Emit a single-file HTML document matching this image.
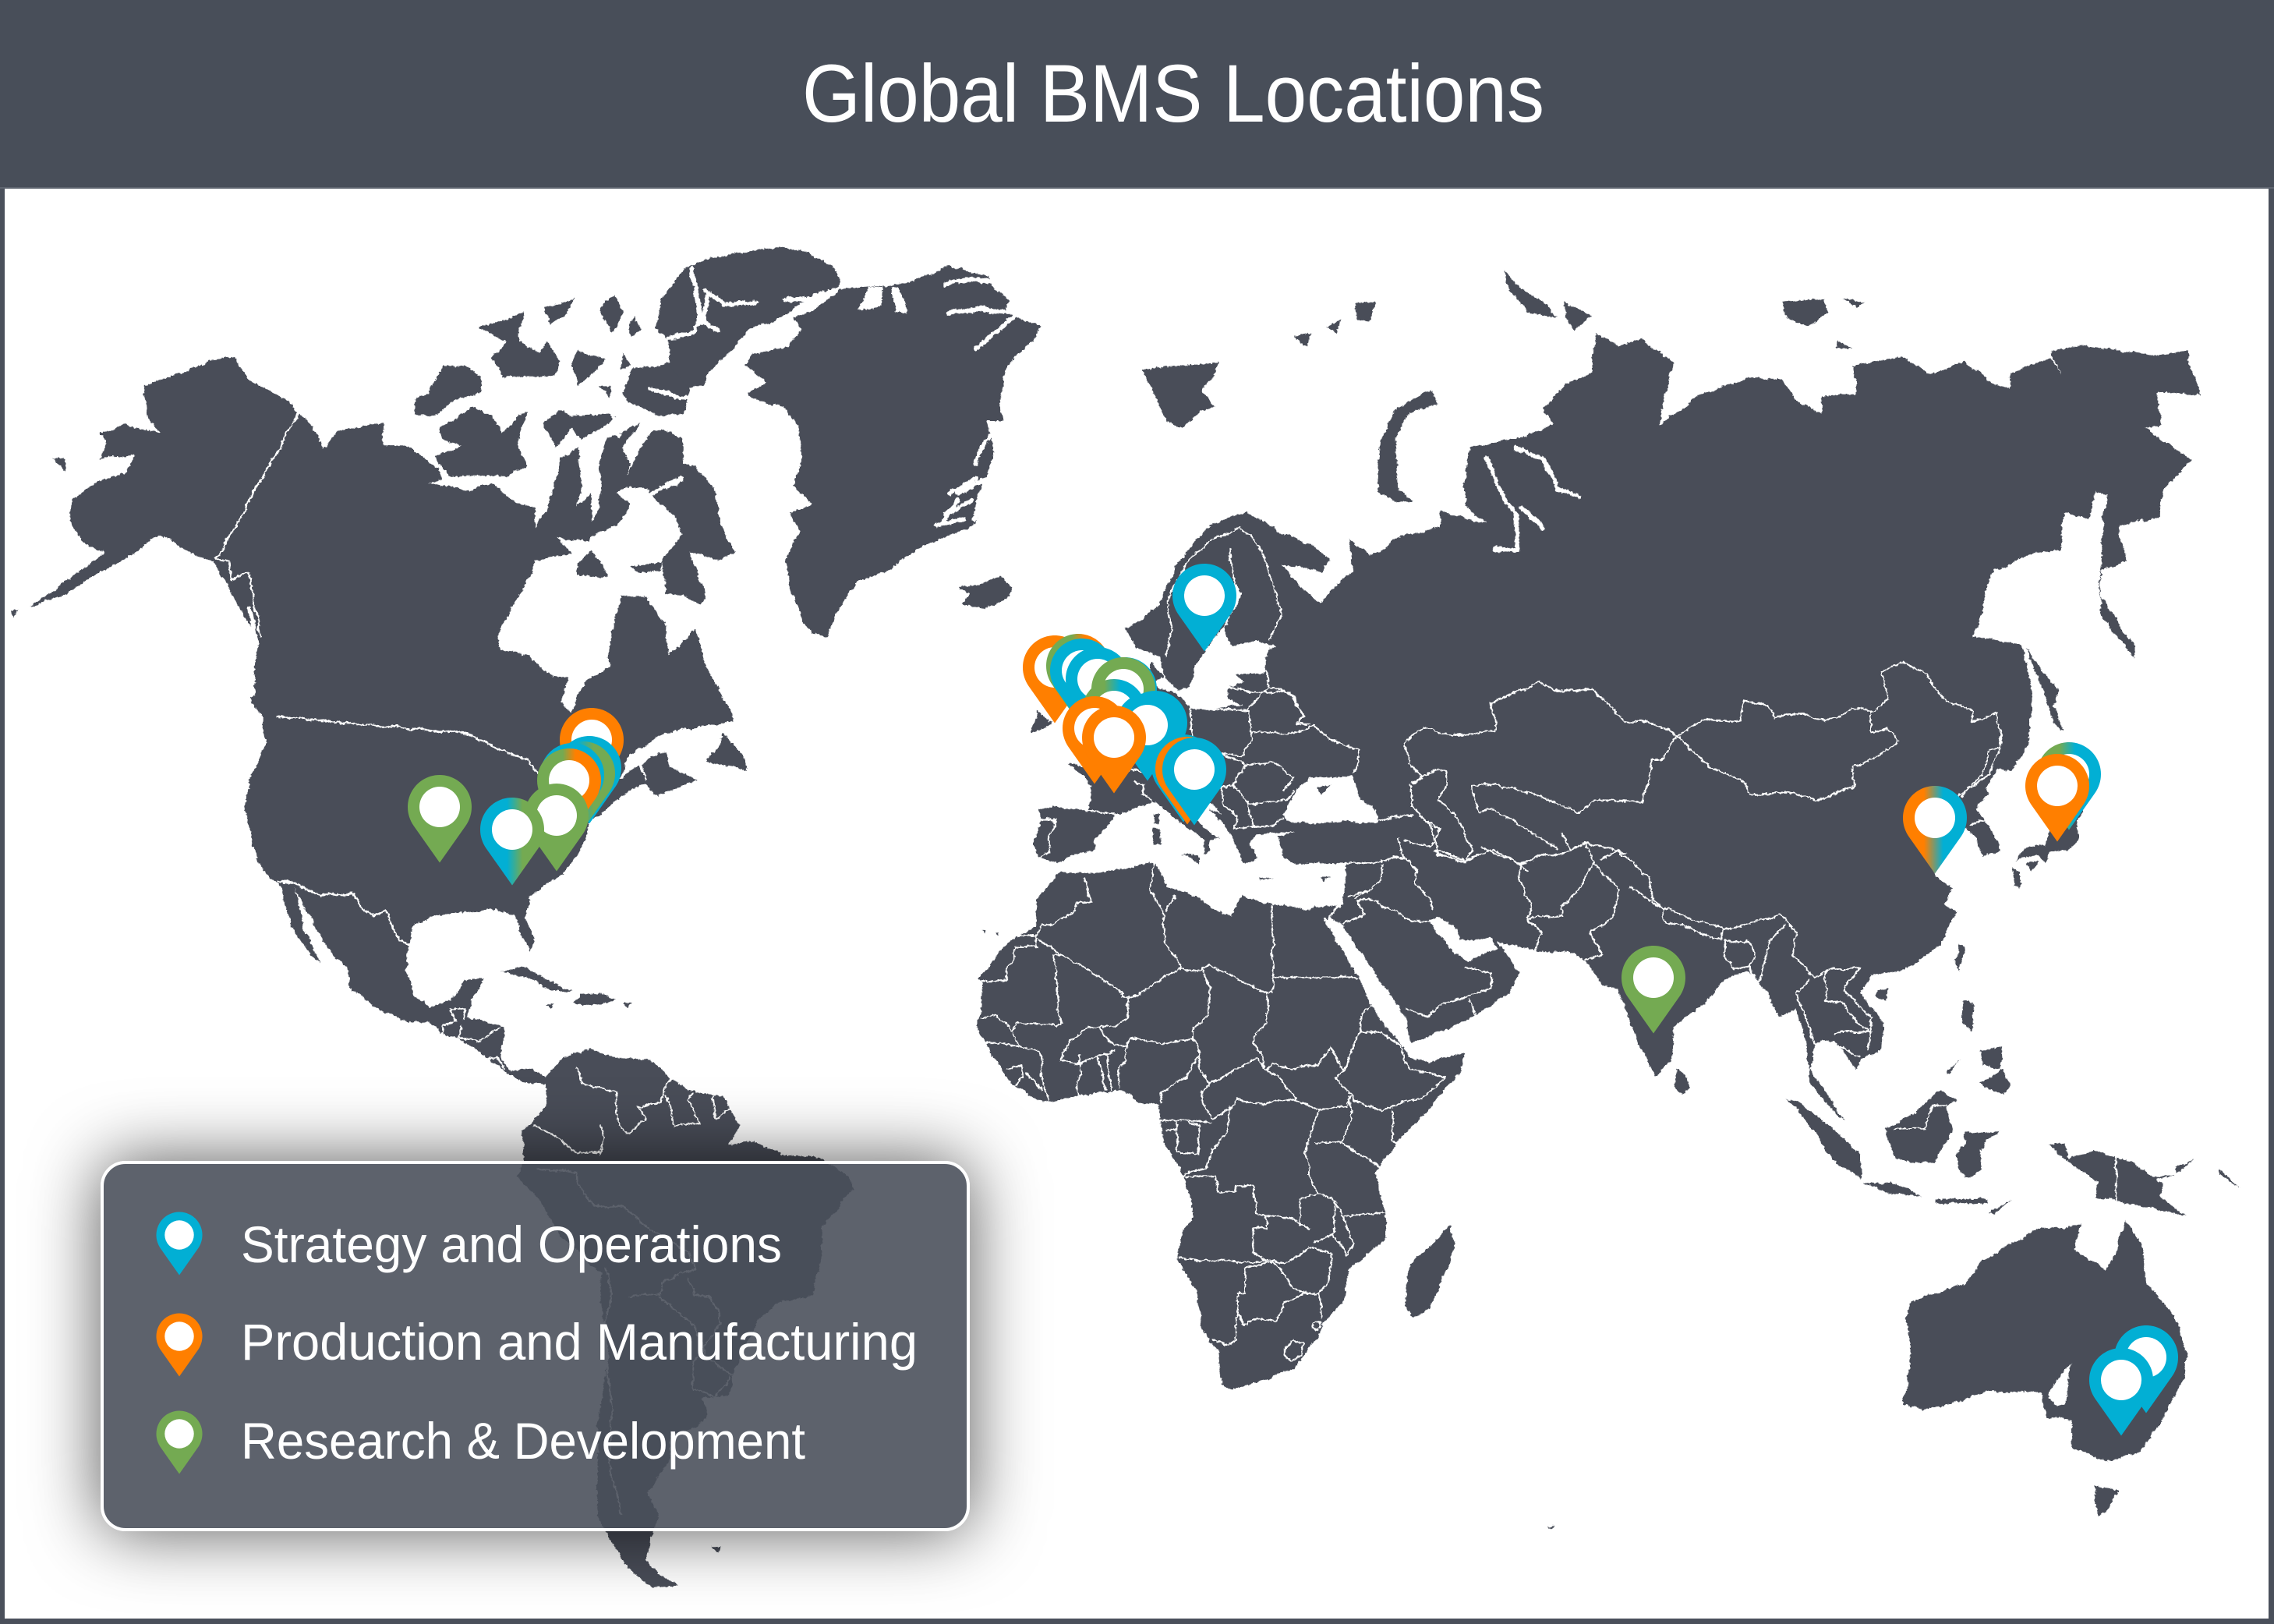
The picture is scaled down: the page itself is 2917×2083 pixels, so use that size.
<!DOCTYPE html>
<html><head><meta charset="utf-8"><title>Global BMS Locations</title>
<style>
html,body{margin:0;padding:0;background:#fff}
#w{position:relative;width:2917px;height:2083px;overflow:hidden;background:#fff;font-family:"Liberation Sans",sans-serif}
svg{position:absolute;left:0;top:0}
#panel{position:absolute;left:129px;top:1489px;width:1115px;height:475px;box-sizing:border-box;border:4px solid #fff;border-radius:32px;background:rgba(72,78,89,.885);box-shadow:0 0 90px rgba(0,0,0,.66)}
</style></head><body><div id="w">
<svg width="2917" height="2083" viewBox="0 0 2917 2083">
<defs>
<filter id="rough" filterUnits="userSpaceOnUse" x="0" y="0" width="2917" height="2083"><feTurbulence type="fractalNoise" baseFrequency=".06" numOctaves="3" seed="4" result="a"/><feDisplacementMap in="SourceGraphic" in2="a" scale="7" xChannelSelector="R" yChannelSelector="G" result="b"/><feTurbulence type="fractalNoise" baseFrequency=".28" numOctaves="2" seed="9" result="c"/><feDisplacementMap in="b" in2="c" scale="4" xChannelSelector="R" yChannelSelector="G"/></filter>
<linearGradient id="go" x1="0" x2="1" y1="0" y2="0"><stop offset=".4" stop-color="#74aa52"/><stop offset=".6" stop-color="#ff7f00"/></linearGradient>
<linearGradient id="gb" x1="0" x2="1" y1="0" y2="0"><stop offset=".35" stop-color="#74aa52"/><stop offset=".6" stop-color="#02afd4"/></linearGradient>
<linearGradient id="bg" x1="0" x2="1" y1="0" y2="0"><stop offset=".42" stop-color="#02afd4"/><stop offset=".66" stop-color="#74aa52"/></linearGradient>
<linearGradient id="ob" x1="0" x2="1" y1="0" y2="0"><stop offset=".33" stop-color="#ff7f00"/><stop offset=".63" stop-color="#02afd4"/></linearGradient>
<g id="pin"><path d="M0-41C22.6-41 41-22.6 41 0 41 9 38.2 17 33.5 24L0 71.5-33.5 24C-38.2 17-41 9-41 0-41-22.6-22.6-41 0-41Z"/><circle r="26" fill="#fff"/></g>
</defs>
<rect width="2917" height="2083" fill="#4a505b"/>
<rect x="6" y="242" width="2904" height="1834" fill="#fff"/>
<rect width="2917" height="240" fill="#484e59"/>
<rect y="240" width="2917" height="2" fill="#5f6570"/>
<text x="1029" y="156" font-size="105" fill="#fff" font-family="'Liberation Sans',sans-serif" textLength="952" lengthAdjust="spacingAndGlyphs">Global BMS Locations</text>

<g filter="url(#rough)"><g transform="scale(1.8604)">
<g fill="#484e59">
<!-- North + Central America -->
<path d="M69 299L85 293 98 296 110 298 102 288 99 266 120 259 144 249 161 247 171 261 202 278 206 285 219 299 223 309 233 297 264 292 264 307 281 307 302 323 305 331 295 333 322 338 339 333 356 347 369 350 369 364 377 352 382 335 387 316 399 309 401 335 398 350 408 340 408 359 422 340 435 350 425 362 408 369 405 374 384 371 394 381 369 387 367 395 360 407 346 431 343 441 346 448 363 451 381 466 392 468 387 484 394 491 403 470 420 460 420 443 428 417 428 410 446 412 459 431 461 452 480 434 487 460 506 494 505 497 459 505 434 520 428 537 444 525 459 518 462 529 481 538 453 549 444 540 428 549 407 567 404 578 394 596 380 607 365 618 363 633 369 649 365 655 359 645 356 631 342 627 323 629 299 631 286 637 282 651 280 669 286 687 296 694 311 690 320 676 333 675 326 689 322 702 348 708 345 729 351 738 367 737 376 743 379 748 360 746 348 739 336 729 317 716 305 713 296 705 283 705 258 694 240 680 240 669 223 649 212 629 203 611 210 640 221 665 209 652 201 639 194 612 178 596 169 558 172 538 183 513 181 495 172 480 175 479 178 441 161 412 147 387 130 381 118 371 110 369 93 381 72 393 45 410 21 418 40 404 72 381 57 374 48 359 50 345 65 333 86 326 93 314 69 316 74 305Z"/>
<!-- Arctic islands -->
<path d="M305 253L320 252 331 259 332 271 315 275 302 285 295 287 286 286 286 275 295 271Z"/>
<path d="M303 295L326 280 339 287 346 299 357 287 363 283 357 307 363 321 350 328 326 328 309 328 300 314 319 309 305 302Z"/>
<path d="M374 292L387 283 394 287 422 285 425 287 401 304 394 295 384 309 375 295Z"/>
<path d="M398 388L408 379 420 398 408 398 398 395Z"/>
<path d="M413 321L419 302 442 292 429 309 435 319 432 328 449 297 459 297 471 302 471 319 480 323 494 340 497 362 507 381 494 386 476 381 487 412 483 417 470 410 459 410 456 386 470 369 466 357 446 338 435 335 425 340 435 347 425 362 411 359 415 335Z"/>
<path d="M435 391L456 387 456 394 439 394Z"/>
<path d="M330 226L362 215 357 230 358 235 372 244 377 235 386 249 382 259 346 260 339 247 350 235 338 230Z"/>
<path d="M375 213L396 206 389 218 379 224Z"/><path d="M413 213L423 203 430 215 422 230Z"/>
<path d="M434 225L437 218 442 227 435 232Z"/><path d="M398 242L417 247 411 256 399 266 394 251Z"/>
<path d="M429 244L434 251 429 255Z"/><path d="M413 266L422 266 420 275Z"/>
<path d="M435 254L463 251 483 254 487 263 476 268 471 285 456 287 435 278 429 273Z"/>
<path d="M452 225L456 206 473 184 487 179 507 175 535 170 553 173 574 183 579 192 578 199 562 202 543 216 529 223 516 227 502 244 488 258 486 265 475 268 462 252 461 235Z"/>
<!-- Greenland, Iceland, Caribbean -->
<path d="M579 200L595 198 615 197 627 194 644 189 654 183 681 191 685 200 696 207 693 216 718 225 714 233 704 242 695 252 689 275 692 290 680 290 685 310 673 360 669 363 646 373 630 379 615 392 590 402 576 425 570 440 555 432 545 406 541 386 551 367 545 354 560 348 547 335 553 315 551 294 541 281 523 277 515 271 529 264 514 252 518 244 543 239 553 227 547 219 562 213Z"/>
<path d="M660 404L673 404 691 397 698 406 693 413 679 420 663 417 669 409Z"/>
<path d="M346 670L360 667 376 674 394 684 379 684 370 676 348 670Z"/><path d="M400 686L416 685 424 690 407 694 396 691Z"/>
<path d="M376 692L382 692 379 695Z"/><path d="M430 692L436 692 433 695Z"/>
<path d="M499 506L513 522 515 531 487 525 497 513Z"/>
<!-- South America -->
<path d="M376 743L388 729 407 723 422 729 447 731 459 740 474 752 499 756 511 776 502 789 521 787 539 796 564 798 586 812 588 819 568 845 566 868 560 894 539 897 523 910 507 943 503 962 483 964 489 975 479 984 462 990 462 1006 446 1030 454 1044 450 1057 448 1066 445 1075 455 1085 468 1093 450 1095 432 1080 420 1060 412 1044 412 981 420 935 414 899 414 877 386 852 374 830 357 812 361 799 360 781 377 763Z"/>
<!-- Africa -->
<path d="M731 601L755 602 796 595 805 611 826 619 837 627 849 632 856 618 878 623 900 627 922 624 916 634 912 633 930 663 938 675 944 692 967 722 973 729 985 732 1010 726 1007 739 988 761 963 788 949 808 952 826 956 835 955 855 930 875 927 897 912 912 912 917 892 944 864 954 849 958 842 954 840 932 829 917 825 890 812 868 815 850 823 838 818 813 804 791 801 781 799 761 785 761 774 751 744 756 719 760 697 747 674 710 678 677 675 675 694 650 714 638 714 621Z"/>
<path d="M1000 844L1003 860 986 902 974 908 969 900 973 870 988 858Z"/>
<!-- Eurasia -->
<path d="M860 353L872 360 884 368 904 375 918 386 911 394 884 389 899 408 911 415 921 404 933 394 930 372 945 383 967 369 993 364 993 353 1025 361 1010 348 1010 334 1013 309 1049 301 1071 293 1064 282 1079 265 1098 257 1100 230 1117 238 1132 234 1154 250 1147 276 1144 293 1171 273 1188 267 1210 260 1229 262 1239 276 1256 286 1256 273 1280 272 1278 252 1312 246 1331 258 1355 249 1372 264 1385 267 1387 257 1414 246 1421 258 1414 242 1433 238 1487 245 1508 242 1511 254 1518 272 1487 271 1491 293 1479 295 1511 317 1491 339 1489 357 1462 361 1460 369 1467 386 1448 394 1448 411 1472 446 1472 454 1448 424 1450 358 1453 342 1445 338 1440 358 1423 353 1421 380 1399 382 1372 396 1365 427 1360 439 1394 444 1402 479 1399 512 1387 532 1378 530 1369 543 1371 548 1362 557 1369 566 1378 580 1378 586 1367 591 1362 577 1356 571 1350 566 1340 572 1334 602 1346 613 1341 623 1349 630 1337 652 1314 669 1290 672 1283 685 1299 705 1297 724 1283 731 1280 737 1266 718 1253 718 1248 737 1272 773 1262 763 1248 747 1245 718 1239 695 1227 701 1217 682 1206 669 1189 675 1175 692 1154 708 1152 731 1142 742 1130 721 1116 682 1105 679 1095 665 1086 657 1060 656 1032 649 1046 669 1048 670 1040 685 1015 702 974 719 969 702 947 670 927 640 918 632 926 622 927 606 928 595 894 596 885 591 882 582 880 577 894 573 866 575 861 582 867 591 858 595 851 580 844 568 834 559 842 561 825 545 820 552 825 565 834 574 840 577 834 579 834 586 830 588 830 580 822 572 810 564 796 552 784 557 770 561 767 564 755 579 755 586 740 590 729 595 716 591 713 582 718 564 716 559 720 556 750 559 752 548 753 541 737 527 747 528 760 512 775 497 790 478 794 456 803 466 795 472 815 481 821 489 840 488 858 487 847 482 847 474 858 471 853 465 872 464 874 448 881 446 867 442 849 446 844 433 857 409 851 401 849 407 844 431 831 449 824 460 821 473 811 476 804 467 799 453 783 446 776 433 786 428 799 417 810 392 820 378 836 361Z"/>
<!-- Islands Europe / Asia -->
<path d="M714 489L726 498 722 501 711 505 715 494Z"/><path d="M727 455L742 445 752 480 765 495 735 510 745 495 735 480Z"/>
<path d="M788 255L840 250 835 262 828 270 838 280 826 285 815 295 805 290 795 270Z"/>
<path d="M892 232L905 230 900 238Z"/><path d="M915 225L925 220 922 230Z"/><path d="M935 210L948 208 944 222 936 220Z"/>
<path d="M986 269L991 278 972 284 962 301 962 315 964 337 974 345 962 346 950 339 950 326 952 304 962 282Z"/>
<path d="M1037 186L1049 199 1064 208 1074 219 1054 216 1040 199Z"/><path d="M1079 208L1096 217 1086 228 1079 219Z"/>
<path d="M1229 208L1258 206 1261 216 1246 225 1232 219Z"/><path d="M1270 206L1285 208 1280 212Z"/><path d="M1266 235L1277 239 1266 241Z"/>
<path d="M1397 446L1406 460 1419 476 1416 487 1423 504 1416 498 1409 476 1402 460Z"/>
<path d="M1412 574L1425 530 1445 538 1432 567 1433 580 1424 587 1414 587 1410 596 1405 589 1397 591 1390 594 1397 585 1410 582Z"/>
<path d="M1387 598L1393 600 1393 612 1389 611Z"/><path d="M1397 596L1406 593 1405 597 1399 601Z"/>
<path d="M815 589L827 589 827 596Z"/><path d="M796 562L799 562 799 568 796 568Z"/><path d="M795 571L800 571 800 583 795 582Z"/>
<path d="M911 605L918 605 912 608Z"/><path d="M868 604L879 605 870 606Z"/>
<path d="M1156 737L1162 742 1165 750 1160 755 1155 750Z"/><path d="M1351 651L1355 652 1351 669 1348 662Z"/><path d="M1295 683L1302 682 1300 690 1294 688Z"/>
<path d="M1232 757L1245 763 1266 780 1283 796 1283 812 1266 802 1248 776Z"/>
<path d="M1285 815L1311 817 1325 825 1300 822Z"/><path d="M1335 827L1370 827 1370 830 1335 830Z"/><path d="M1372 835L1388 828 1375 836Z"/>
<path d="M1300 778L1321 767 1337 752 1349 758 1342 763 1346 780 1334 802 1307 799 1302 786Z"/>
<path d="M1355 781L1379 780 1370 786 1365 793 1367 806 1356 812 1351 806 1349 796 1355 789Z"/>
<path d="M1353 690L1361 692 1360 711 1353 705Z"/><path d="M1365 724L1381 721 1379 737 1367 734Z"/><path d="M1365 747L1381 737 1387 747 1381 755Z"/><path d="M1342 739L1351 731 1344 740Z"/>
<path d="M1412 789L1424 789 1426 799 1443 793 1471 802 1492 817 1489 825 1506 838 1492 835 1471 830 1445 825 1447 815 1429 804 1421 796Z"/>
<path d="M1500 805L1512 800 1502 808Z"/><path d="M1530 806L1545 820 1530 810Z"/><path d="M1475 812L1500 810 1480 815Z"/>
<!-- Australia -->
<path d="M1318 897L1356 885 1365 871 1388 856 1405 848 1435 845 1430 861 1452 876 1459 864 1465 841 1477 858 1480 884 1499 907 1508 933 1506 949 1489 982 1475 1001 1454 1008 1429 998 1428 978 1412 977 1407 960 1370 959 1349 967 1325 972 1313 968 1318 933 1314 910Z"/>
<path d="M1444 1024L1461 1027 1454 1040 1446 1045Z"/>
<path d="M37 317L44 316 46 325 40 321Z"/>
<path d="M8 421L12 420 9 426Z"/><path d="M677 642L680 642 679 644Z"/><path d="M686 643L689 643 688 645Z"/><path d="M490 1067L497 1066 494 1070Z"/><path d="M1067 1053L1072 1052 1070 1055Z"/>
</g>
<!-- White seas / fjords -->
<g fill="#fff">
<path d="M885 561L894 545 902 536 918 536 933 534 938 552 950 559 950 568 928 566 904 568 887 566Z"/>
<path d="M991 632L1002 638 1007 648 1029 647 1032 654 1012 663 1004 658 985 635Z"/>
<path d="M1412 960L1428 940 1424 968 1418 970Z"/>
<path d="M599 198L592 214 607 211 609 198Z"/><path d="M615 198L617 215 626 216 620 198Z"/>
</g>
<path d="M909 543L918 541 911 548Z" fill="#484e59"/>
<g fill="none" stroke="#fff" stroke-linejoin="round" stroke-linecap="round">
<g stroke-width="3">
<path d="M1025 315L1035 340 1046 356 1046 380 1030 378"/><path d="M1045 309L1064 317 1074 337 1088 342"/><path d="M1049 350L1064 364"/>
<path d="M476 185L481 206 483 219 479 229 461 233M486 200L500 210 520 208M488 205L484 222 495 228M542 207L560 206 574 200"/>
<path d="M651 196L668 192 685 195M654 216L676 213 699 216M699 219L673 240M673 330L655 340M670 345L652 355M665 358L646 362M682 300L672 320"/>
<path d="M448 268L470 275 480 272"/><path d="M440 345L470 330M422 285L426 300"/>
<path d="M660 340L680 330 672 358M660 345L650 360"/>
<path d="M172 420L177 445M168 440L172 470"/>
</g>
<g stroke-width="1.3">
<path d="M206 285L149 386 158 387 159 400 171 395 175 415 180 439"/>
<path d="M192 494L323 506 336 513 363 524 371 533"/><path d="M428 536L441 525 445 538"/>
<path d="M192 608L204 609 220 617 235 617 243 616 251 628 258 632 266 628 275 648 283 651"/>
</g>
<g stroke-width="1.05">
<path d="M311 696L320 695 320 703M311 696L314 704 305 707 306 713M319 707L316 715 330 718 345 709M336 729L342 729 348 738"/>
<path d="M397 736L402 747 425 753 424 767 428 778 434 781 445 772 439 763 456 760 459 747 464 742M459 756L465 776 482 774 475 758 478 754M492 755L493 772 504 763"/>
<path d="M414 775L417 785 413 796M368 776L385 784 397 794 413 795M370 806L398 808 398 817 410 832 430 832 442 843 475 863 479 875 458 883 454 892 434 894"/>
<path d="M418 875L422 892 416 914 422 972 420 1008 428 1044M475 881L479 894 489 894 495 903 497 912 478 939 478 957 493 963 505 948 487 935 479 914 454 894"/>
<!-- Africa -->
<path d="M748 606L752 621 742 622 741 628 727 637 718 638 715 643 715 647M696 645L715 645 715 653 700 653 698 665 694 668 694 676 675 677"/>
<path d="M715 647L766 679 774 684 774 688 785 686 793 680 814 667M727 658L731 706 701 706 698 710M727 658L733 658"/>
<path d="M796 595L793 613 803 631 803 650 814 666M811 617L804 627M814 667L825 670 834 666 874 685 878 684 877 624M878 674L936 674"/>
<path d="M874 685L874 705 867 712 864 719 870 727 871 737M829 668L834 681 833 700 823 709 823 716"/>
<path d="M823 716L804 719 793 718 779 716 777 719 775 732 772 737 771 750M778 688L778 702 771 707 757 708 749 709 738 717 733 726 731 732"/>
<path d="M757 708L760 713 768 721 776 721M731 732L744 734 757 728 768 724M744 728L745 739 742 751 745 758M757 728L762 751M763 727L766 751"/>
<path d="M677 702L686 700 694 705 698 712 703 721 716 724 719 732 718 744 722 759M675 719L690 719 703 721M694 737L704 734 705 742 701 748M707 740L713 745 718 752"/>
<path d="M827 727L818 742 807 749 801 754 800 760M823 716L827 726 826 737 834 747"/>
<path d="M834 747L829 753 829 761 836 771 848 765 853 758 867 761 889 758 900 761 910 765 928 763M834 747L851 739 866 729 873 738 881 742 893 758"/>
<path d="M873 738L878 733 892 737 908 734 918 722 921 728 926 739 921 743 932 755 928 763M926 739L937 712 952 711 966 722 971 737 996 743 981 758 969 759 954 765 934 760 932 755M937 712L940 697 947 693"/>
<path d="M960 766L960 787 963 788M925 787L951 805M930 756L932 772 925 787 907 788"/>
<path d="M849 764L845 781 836 793 832 806 818 808 816 811M818 811L838 811 841 822 852 822 852 817 864 818 866 837 889 840 903 848 896 843 897 826 908 823 919 826 926 838M910 765L904 781 900 796 903 811 908 823"/>
<path d="M800 772L812 772 836 774M812 772L812 795 826 795 827 776 820 774M812 779L803 779"/>
<path d="M874 838L874 847 864 847 864 863 873 870M813 867L826 869 848 869 856 871 878 869 888 871 903 860 918 864 917 882 910 892M906 856L919 851 921 828M926 838L930 850 933 858 929 866 925 860 919 851M926 839L955 835"/>
<path d="M859 874L878 870 892 887 899 892 910 893M859 874L858 891 853 891 852 923 847 927 837 923M853 907L858 914 867 908 880 911 886 898 899 892M910 893L911 909"/>
<circle cx="908" cy="914" r="3"/><path d="M886 930L892 924 899 926 898 934 890 938 886 934Z"/>
<!-- Middle East / Central Asia -->
<path d="M928 595L945 595 962 591 968 592M951 566L959 564 974 562M968 592L977 600 975 609 986 620 988 627M964 579L968 592M953 596L952 607 934 620"/>
<path d="M944 619L973 635 985 635M926 637L941 631 936 622 944 619M930 618L944 613M970 696L985 700 995 692 1028 682 1028 670 1010 668M1013 689L1018 700"/>
<path d="M972 542L974 556 986 570 991 583 991 589 1010 594 1015 586 1003 561 991 551 998 542 998 531 989 531 974 540"/>
<path d="M969 512L981 501 1001 507 1032 504 1028 485 1062 470 1071 476 1098 475 1120 498 1137 497 1156 507 1147 523 1139 523 1137 537 1132 553 1100 552 1088 561 1064 549 1030 541 1015 542 1019 561M969 512L972 526 981 537 974 541"/>
<path d="M1156 507L1176 496 1200 498 1202 483 1219 486 1224 494 1244 492 1258 498 1278 489 1292 490 1302 482M1156 507L1178 529 1200 537 1207 548 1234 546 1251 552 1278 542 1278 529 1292 523 1309 511 1302 502 1290 505 1290 490"/>
<path d="M1302 482L1297 463 1312 457 1326 463 1341 483 1360 490 1360 498 1377 492 1380 512 1372 534 1355 545 1344 556M1353 550L1356 543 1367 535 1371 518 1379 514 1379 505M1359 569L1369 566"/>
<path d="M989 586L1010 593 1030 585 1054 600M1019 561L1030 558 1049 570 1074 585M1076 575L1083 586 1093 581 1113 586 1122 589"/>
<path d="M1048 595L1048 607 1056 626 1053 633 1063 643 1058 656M1021 584L1048 595 1067 589 1077 589 1093 581 1098 594 1091 610 1077 626 1077 631 1053 633M1098 594L1116 613 1112 633 1097 643 1105 659 1093 662"/>
<path d="M1103 592L1116 587 1137 605 1140 621 1147 626 1189 641 1227 631 1239 643 1236 659 1252 675M1124 612L1140 623 1147 626 1147 634 1187 649 1189 641M1189 649L1189 659 1196 669 1206 665 1210 675M1189 649L1206 649 1211 659 1206 665M1231 638L1220 649 1215 672 1212 677"/>
<path d="M1248 675L1239 685 1245 701 1252 721 1248 737M1252 675L1259 669 1259 690 1271 692 1280 705 1290 711 1288 724M1266 712L1280 711 1290 711M1266 720L1283 729M1259 669L1283 667 1271 682 1290 701 1290 711"/>
<path d="M1306 778L1327 778 1332 762 1342 762M1459 797L1459 828"/>
<!-- Europe -->
<path d="M804 416L808 433 804 453M804 416L820 385 836 372 855 364 867 375M848 378L850 397 851 401M867 375L877 400 884 424 875 441"/>
<path d="M847 474L871 478 876 474M873 462L876 474 890 478 899 494 895 499 903 499M820 487L861 491 863 511 856 521 843 520 822 508 820 487"/>
<path d="M862 505L892 506 905 500 914 507 926 514 936 516 936 528 933 532M860 490L870 478 890 477 899 493 894 500"/>
<path d="M858 528L878 525 892 536 885 545M850 541L858 528M850 541L861 554 887 552 892 545M842 520L858 527M842 520L842 543 850 541"/>
<path d="M861 554L863 570 878 570 885 564M851 571L878 570M842 543L844 555 854 564 851 571"/>
<path d="M750 558L770 562M717 565L728 565 723 579 724 588 716 592M782 539L788 541 788 548 795 552M778 530L800 535 815 530"/>
<path d="M982 566L993 571 986 584 969 580"/>
</g></g>
</g></g>

<!-- Map pins -->
<g fill="#74aa52">
<use href="#pin" x="564" y="1035"/>
<use href="#pin" x="759" y="949" fill="#ff7f00"/>
<use href="#pin" x="756" y="985" fill="#02afd4"/>
<use href="#pin" x="748" y="992" fill="url(#bg)"/>
<use href="#pin" x="734" y="994" fill="#02afd4"/>
<use href="#pin" x="730" y="1001" fill="url(#go)"/>
<use href="#pin" x="714" y="1046"/>
<use href="#pin" x="657" y="1064" fill="url(#bg)"/>
<use href="#pin" x="1545" y="764" fill="#02afd4"/>
<use href="#pin" x="1353" y="856" fill="#ff7f00"/>
<use href="#pin" x="1383" y="854" fill="url(#go)"/>
<use href="#pin" x="1388" y="860" fill="#02afd4"/>
<use href="#pin" x="1408" y="871" fill="#02afd4"/>
<use href="#pin" x="1443" y="884" fill="#02afd4"/>
<use href="#pin" x="1441" y="884"/>
<use href="#pin" x="1429" y="912" fill="url(#gb)"/>
<use href="#pin" x="1482" y="927" fill="#02afd4"/>
<use href="#pin" x="1472" y="930" fill="#02afd4"/>
<use href="#pin" x="1404" y="934" fill="#ff7f00"/>
<use href="#pin" x="1429" y="946" fill="#ff7f00"/>
<use href="#pin" x="1518" y="983" fill="#02afd4"/>
<use href="#pin" x="1523" y="986" fill="#ff7f00"/>
<use href="#pin" x="1532" y="987" fill="#02afd4"/>
<use href="#pin" x="2121" y="1254"/>
<use href="#pin" x="2482" y="1049" fill="url(#ob)"/>
<use href="#pin" x="2654" y="993" fill="url(#gb)"/>
<use href="#pin" x="2639" y="1008" fill="#ff7f00"/>
<use href="#pin" x="2753" y="1741" fill="#02afd4"/>
<use href="#pin" x="2721" y="1770" fill="#02afd4"/>
</g>
</svg>
<div id="panel"></div>
<svg width="2917" height="2083" viewBox="0 0 2917 2083">
<g font-family="'Liberation Sans',sans-serif" font-size="66" fill="#fff">
<text x="309" y="1619" textLength="694" lengthAdjust="spacingAndGlyphs">Strategy and Operations</text>
<text x="309" y="1744" textLength="868" lengthAdjust="spacingAndGlyphs">Production and Manufacturing</text>
<text x="309" y="1871" textLength="724" lengthAdjust="spacingAndGlyphs">Research &amp; Development</text>
</g>
<use href="#pin" transform="translate(230 1584) scale(.72)" fill="#02afd4"/>
<use href="#pin" transform="translate(230 1714) scale(.72)" fill="#ff7f00"/>
<use href="#pin" transform="translate(230 1839) scale(.72)" fill="#74aa52"/>
</svg>
</div></body></html>
